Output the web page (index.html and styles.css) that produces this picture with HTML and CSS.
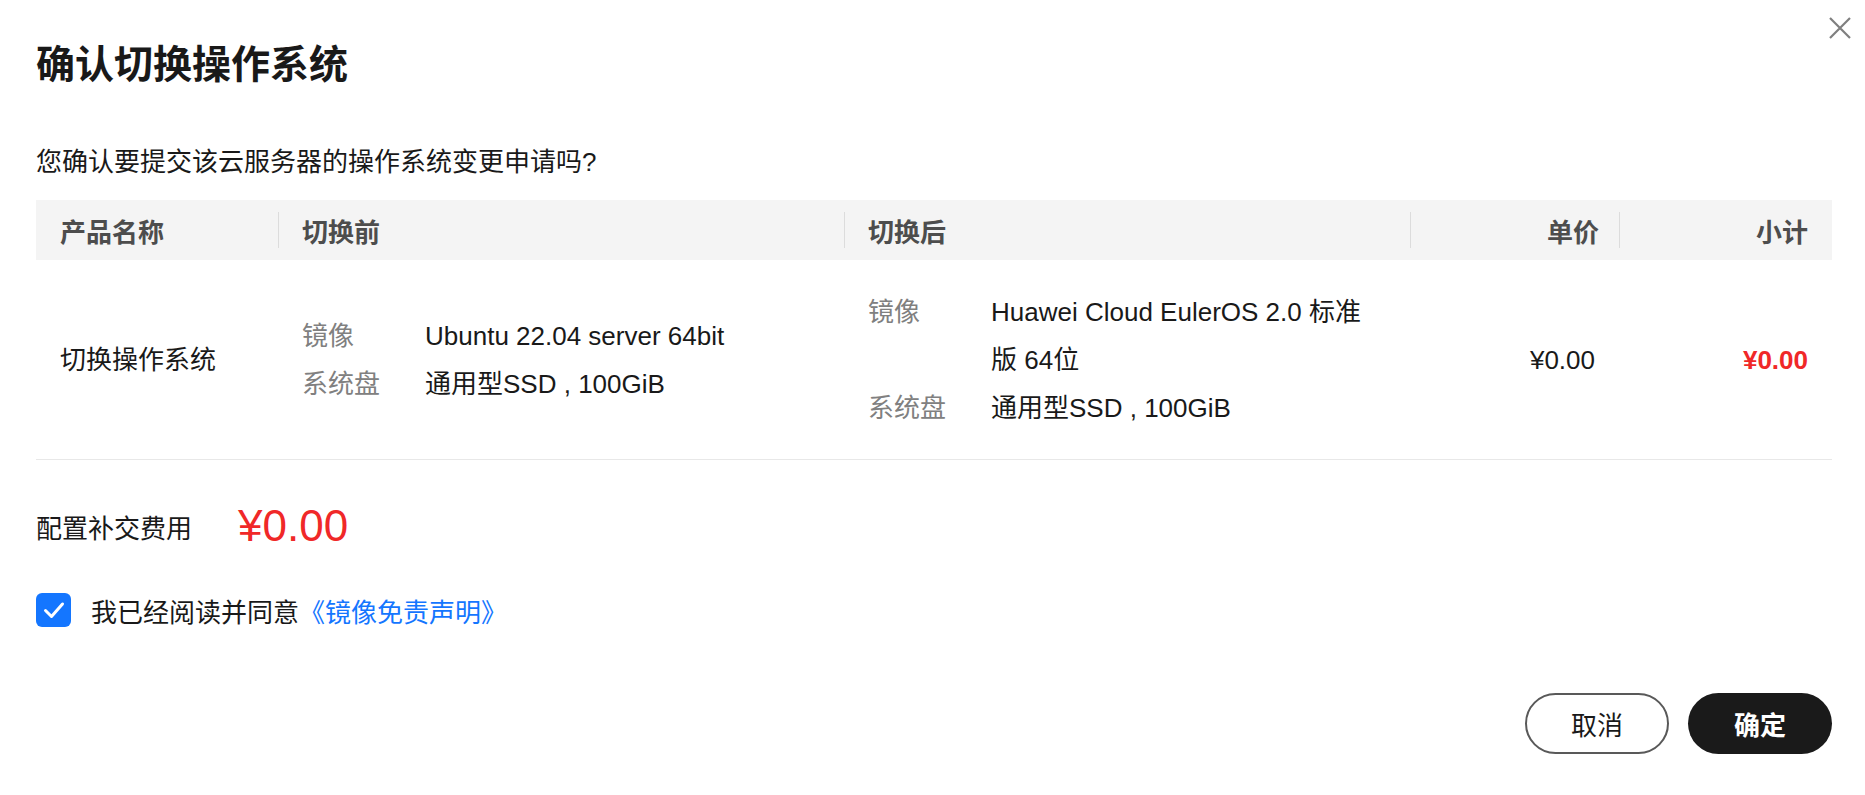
FILE: index.html
```html
<!DOCTYPE html>
<html lang="zh-CN">
<head>
<meta charset="utf-8">
<title>确认切换操作系统</title>
<link rel="stylesheet" href="styles.css">
</head>
<body>
<div class="dialog">
  <button class="close" aria-label="关闭">
    <svg width="22" height="22" viewBox="0 0 22 22"><path d="M1 1L21 21M21 1L1 21" stroke="#7f7f7f" stroke-width="2.2" fill="none"/></svg>
  </button>
  <h1 class="title">确认切换操作系统</h1>
  <p class="subtitle">您确认要提交该云服务器的操作系统变更申请吗?</p>

  <div class="table">
    <div class="thead">
      <div class="th">产品名称</div>
      <div class="th sep">切换前</div>
      <div class="th sep">切换后</div>
      <div class="th sep right pr-price">单价</div>
      <div class="th sep right pr-sub">小计</div>
    </div>
    <div class="trow">
      <div class="td">切换操作系统</div>
      <div class="td">
        <dl class="spec">
          <dt>镜像</dt><dd>Ubuntu 22.04 server 64bit</dd>
          <dt>系统盘</dt><dd>通用型SSD , 100GiB</dd>
        </dl>
      </div>
      <div class="td">
        <dl class="spec">
          <dt>镜像</dt><dd>Huawei Cloud EulerOS 2.0 标准版 64位</dd>
          <dt>系统盘</dt><dd>通用型SSD , 100GiB</dd>
        </dl>
      </div>
      <div class="td right pr-price">¥0.00</div>
      <div class="td right pr-sub total">¥0.00</div>
    </div>
  </div>

  <div class="fee">
    <span class="fee-label">配置补交费用</span>
    <span class="fee-amount">¥0.00</span>
  </div>

  <label class="agree">
    <span class="checkbox">
      <svg width="24" height="24" viewBox="0 0 24 24"><path d="M3.5 12.5L9.5 18.5L20.5 6" stroke="#fff" stroke-width="3" fill="none" stroke-linecap="round" stroke-linejoin="round"/></svg>
    </span>
    <span class="agree-text">我已经阅读并同意<a class="link" href="#">《镜像免责声明》</a></span>
  </label>

  <div class="footer">
    <button class="btn btn-cancel">取消</button>
    <button class="btn btn-ok">确定</button>
  </div>
</div>
</body>
</html>
```

FILE: styles.css
```css
* { box-sizing: border-box; }
html, body {
  margin: 0;
  padding: 0;
  background: #fff;
}
body {
  font-family: "Liberation Sans", "Noto Sans CJK SC", Arial, sans-serif;
  color: #191919;
  font-size: 26px;
}
.dialog {
  position: relative;
  width: 1865px;
  height: 795px;
  padding: 36px 33px 0 36px;
}
.close {
  position: absolute;
  top: 17px;
  left: 1829px;
  width: 22px;
  height: 22px;
  padding: 0;
  border: 0;
  background: none;
  cursor: pointer;
}
.close svg { display: block; }
.title {
  margin: 0;
  font-size: 39px;
  line-height: 51px;
  font-weight: 700;
  color: #191919;
  font-family: "Noto Sans CJK SC", sans-serif;
}
.subtitle {
  margin: 57px 0 0;
  line-height: 36px;
  font-size: 26px;
}
.table {
  margin-top: 20px;
}
.thead, .trow {
  display: grid;
  grid-template-columns: 242px 566px 566px 209px 213px;
  align-items: center;
}
.thead {
  height: 60px;
  background: #f4f4f4;
}
.th {
  height: 36px;
  display: flex;
  align-items: center;
  padding: 0 24px;
  font-weight: 700;
  color: #4d4d4d;
}
.th.sep { border-left: 1px solid #dcdcdc; padding-left: 23px; }
.right { justify-content: flex-end; text-align: right; }
.pr-price { padding-right: 20px; }
.pr-sub { padding-right: 24px; }
.trow {
  padding: 28px 0 27px;
  border-bottom: 1px solid #e8e8e8;
}
.td {
  padding: 0 24px;
  line-height: 48px;
}
.spec {
  margin: 0;
  display: grid;
  grid-template-columns: 123px 392px;
}
.spec dt { color: #808080; }
.spec dd { margin: 0; }
.total {
  color: #f02828;
  font-weight: 700;
}
.fee {
  margin-top: 38px;
  height: 56px;
  display: flex;
  align-items: center;
  gap: 46px;
}
.fee-amount {
  font-size: 44px;
  color: #f02828;
}
.agree {
  margin-top: 38px;
  height: 36px;
  display: flex;
  align-items: center;
  gap: 20px;
}
.checkbox {
  width: 35px;
  height: 34px;
  border-radius: 6px;
  background: #1476ff;
  display: flex;
  align-items: center;
  justify-content: center;
}
.checkbox svg { display: block; }
.link {
  color: #1476ff;
  text-decoration: none;
}
.footer {
  margin-top: 65px;
  display: flex;
  justify-content: flex-end;
  gap: 19px;
}
.btn {
  width: 144px;
  height: 61px;
  border-radius: 31px;
  font-family: "Noto Sans CJK SC", sans-serif;
  font-size: 26px;
  cursor: pointer;
}
.btn-cancel {
  background: #fff;
  border: 2px solid #595959;
  color: #191919;
}
.btn-ok {
  background: #1a1a1a;
  border: 0;
  color: #fff;
  font-weight: 700;
}
```
